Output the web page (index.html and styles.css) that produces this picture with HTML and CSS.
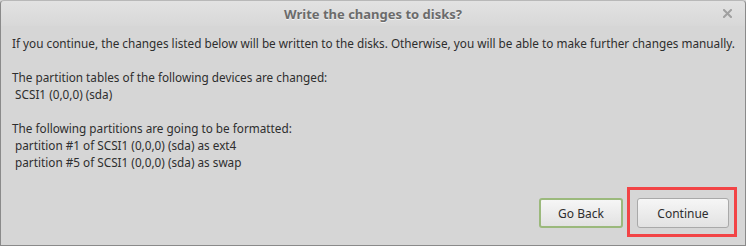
FILE: index.html
```html
<!DOCTYPE html>
<html>
<head>
<meta charset="utf-8">
<link rel="stylesheet" href="styles.css">
</head>
<body>
<div class="window">
  <div class="titlebar">
    <span class="title">Write the changes to disks?</span>
    <svg class="close" width="9" height="9" viewBox="0 0 9 9"><path d="M1 1L8 8M8 1L1 8" stroke="#a0a0a0" stroke-width="2" stroke-linecap="square"/></svg>
  </div>
  <div class="content">
    <p>If you continue, the changes listed below will be written to the disks. Otherwise, you will be able to make further changes manually.</p>
    <p>The partition tables of the following devices are changed:<br>&nbsp;SCSI1 (0,0,0) (sda)</p>
    <p>The following partitions are going to be formatted:<br>&nbsp;partition #1 of SCSI1 (0,0,0) (sda) as ext4<br>&nbsp;partition #5 of SCSI1 (0,0,0) (sda) as swap</p>
  </div>
  <div class="actions">
    <button class="btn btn-back">Go Back</button>
    <button class="btn btn-continue">Continue</button>
  </div>
  <div class="highlight"></div>
</div>
</body>
</html>
```
FILE: styles.css
```css
html, body {
  margin: 0;
  padding: 0;
  width: 746px;
  height: 246px;
  overflow: hidden;
  background: #d6d6d6;
}
.window {
  position: relative;
  box-sizing: border-box;
  width: 746px;
  height: 246px;
  background: #d6d6d6;
  border: 1px solid #8a8a8a;
  border-top-color: #b8b8b8;
  border-radius: 4px 4px 0 0;
  display: flex;
  flex-direction: column;
  font-family: "Noto Sans", sans-serif;
  color: #2e2e2e;
}
.titlebar {
  height: 25px;
  flex: none;
  display: flex;
  align-items: center;
  justify-content: center;
  position: relative;
  background: linear-gradient(#e2e2e2, #d8d8d8);
  border-radius: 4px 4px 0 0;
}
.title {
  font-size: 13px;
  font-weight: bold;
  color: #6b6b6b;
  text-shadow: 0 1px 0 #f2f2f2;
}
.close {
  position: absolute;
  right: 13px;
  top: 8px;
}
.content {
  padding: 9px 11px 0 11px;
  font-size: 11.75px;
  line-height: 17px;
  white-space: nowrap;
  flex: 1;
}
.content p {
  margin: 0 0 17px 0;
}
.actions {
  display: flex;
  justify-content: flex-end;
  gap: 14px;
  padding: 0 16px 17px 0;
}
.btn {
  font-family: "Noto Sans", sans-serif;
  font-size: 12px;
  color: #2e2e2e;
  height: 30px;
  box-sizing: border-box;
  border-radius: 3px;
  background: linear-gradient(#f6f6f6, #e2e2e2);
  border: 1px solid #a9a9a9;
  padding: 0;
}
.btn-back {
  width: 84px;
  border: 2px solid #9bb97c;
}
.btn-continue {
  width: 92px;
}
.highlight {
  position: absolute;
  left: 626px;
  top: 186px;
  width: 110px;
  height: 50px;
  box-sizing: border-box;
  border: 3px solid #f24446;
}
```
